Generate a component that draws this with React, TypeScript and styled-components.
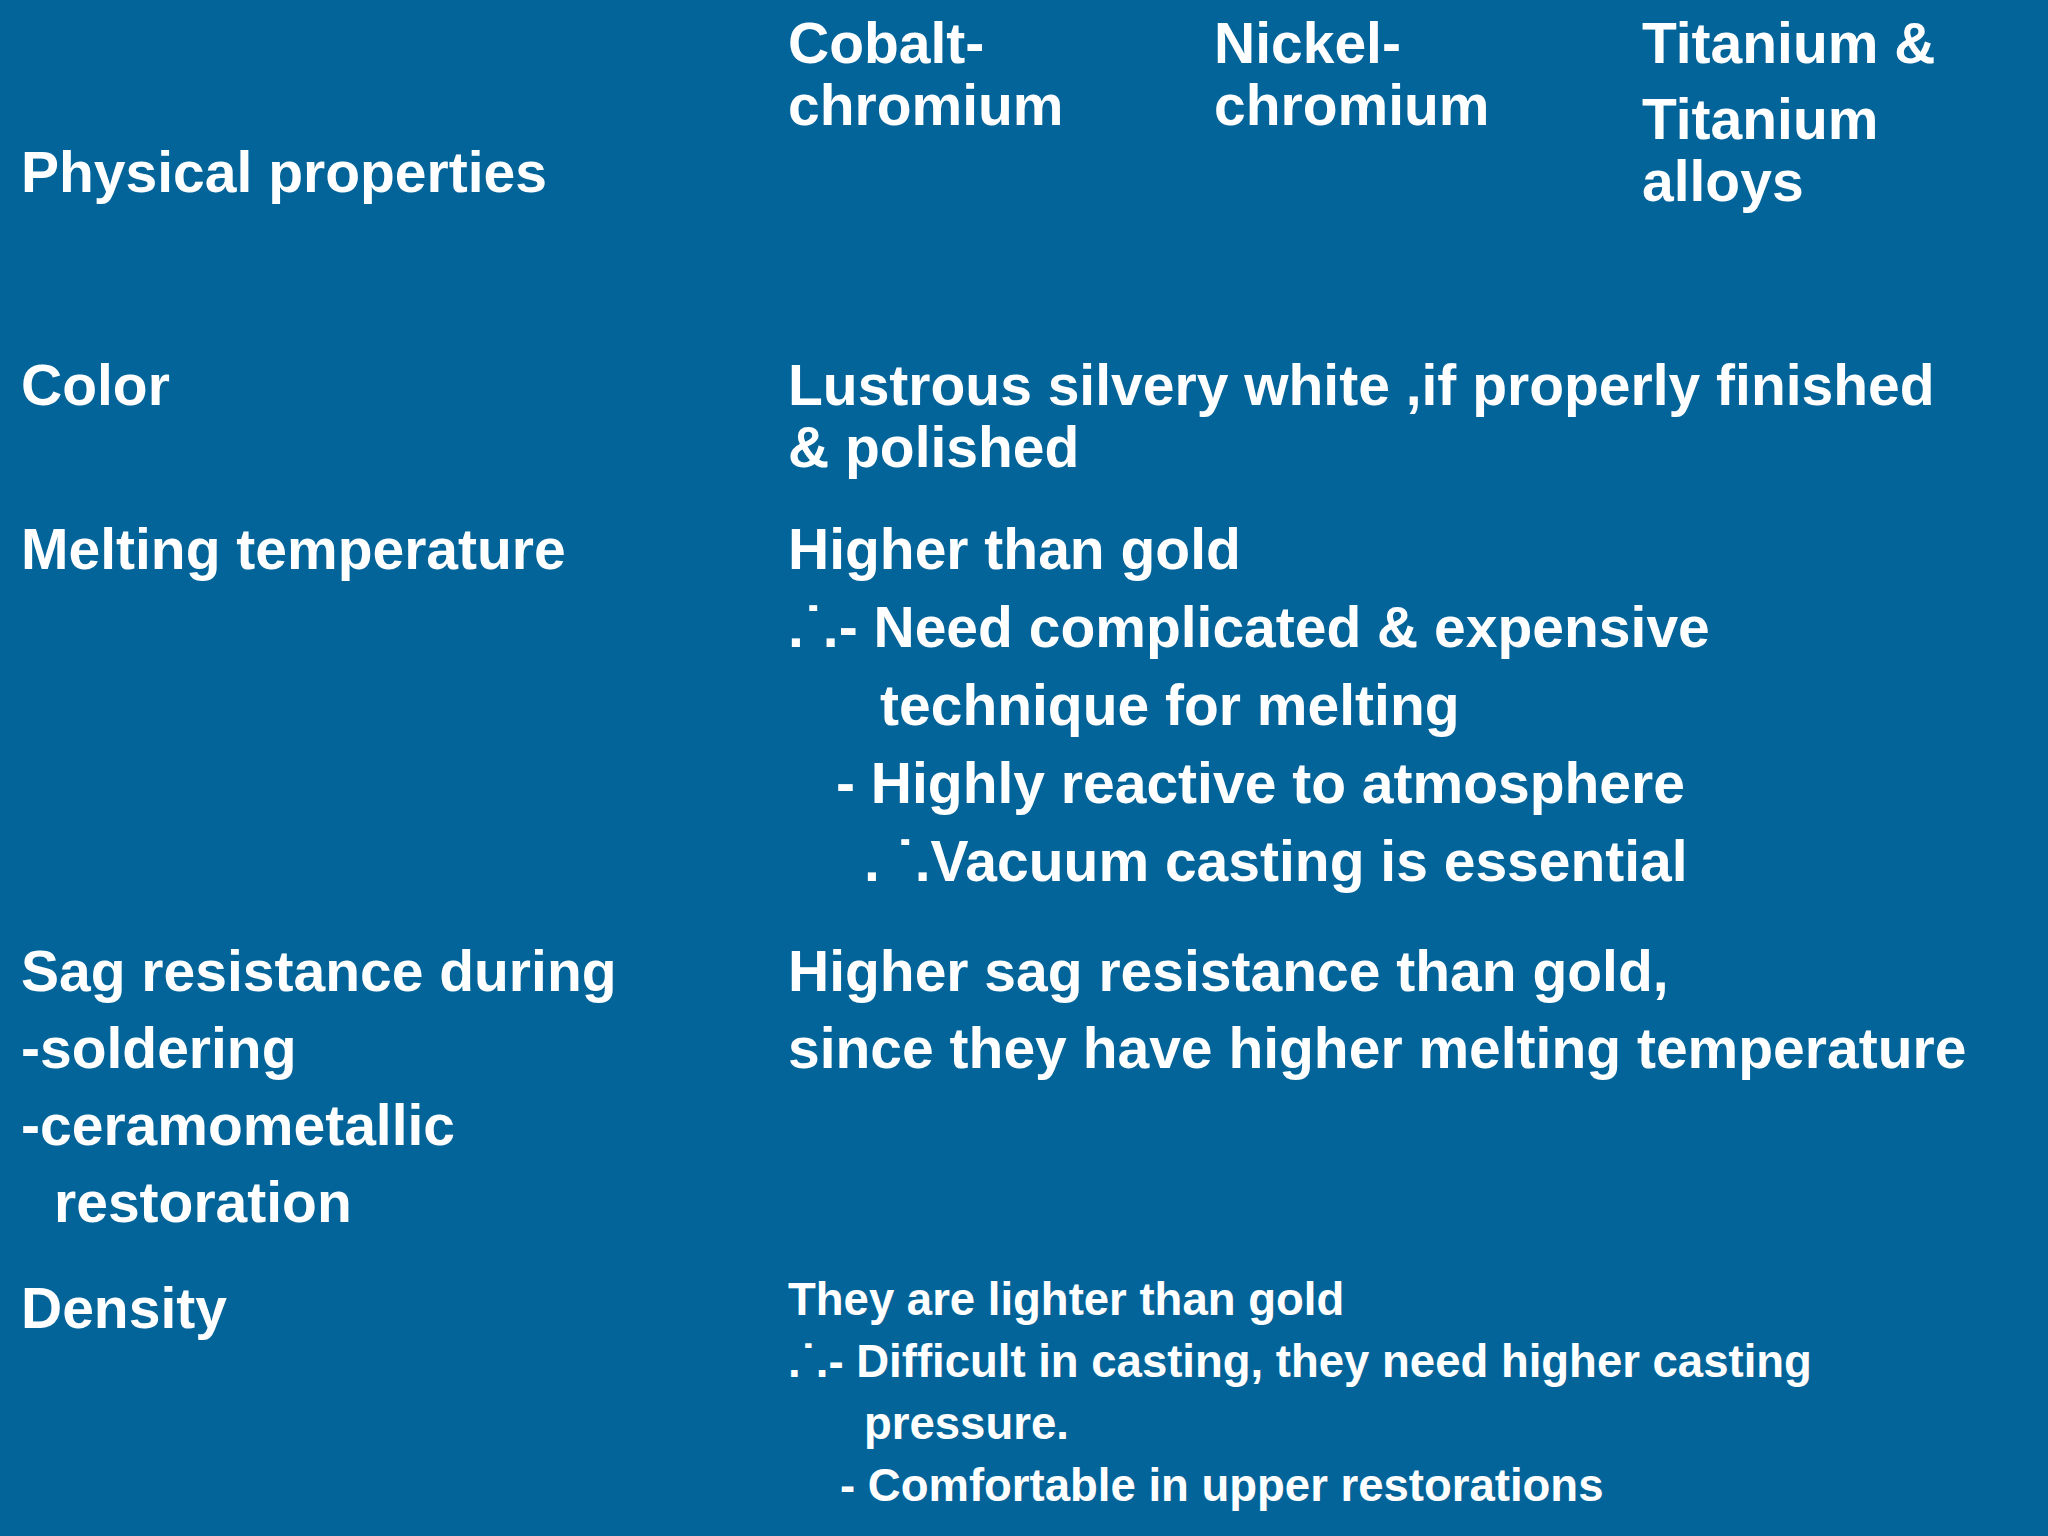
import styled, { createGlobalStyle } from 'styled-components';

const GlobalStyle = createGlobalStyle`
  html, body {
    margin: 0;
    padding: 0;
    background: #03649a;
  }
`;

export default function App() {
  return (
    <>
      <GlobalStyle />
      <Slide>
        <Row>
          <Stack $offset={129}>
            <Line>Physical properties</Line>
          </Stack>
          <HeaderCols>
            <Stack>
              <Line>
                Cobalt-
                <br />
                chromium
              </Line>
            </Stack>
            <Stack>
              <Line>
                Nickel-
                <br />
                chromium
              </Line>
            </Stack>
            <Stack $gap={14}>
              <Line>Titanium &amp;</Line>
              <Line>
                Titanium
                <br />
                alloys
              </Line>
            </Stack>
          </HeaderCols>
        </Row>

        <Row $gap={142}>
          <Stack>
            <Line>Color</Line>
          </Stack>
          <Stack>
            <Line>
              Lustrous silvery white ,if properly finished
              <br />
              &amp; polished
            </Line>
          </Stack>
        </Row>

        <Row $gap={40}>
          <Stack>
            <Line>Melting temperature</Line>
          </Stack>
          <Stack $gap={16}>
            <Line>Higher than gold</Line>
            <Line>.˙.- Need complicated &amp; expensive</Line>
            <Line $indent={92}>technique for melting</Line>
            <Line $indent={48}>- Highly reactive to atmosphere</Line>
            <Line $indent={76}>. ˙.Vacuum casting is essential</Line>
          </Stack>
        </Row>

        <Row $gap={48}>
          <Stack $gap={15}>
            <Line>Sag resistance during</Line>
            <Line>-soldering</Line>
            <Line>-ceramometallic</Line>
            <Line $indent={33}>restoration</Line>
          </Stack>
          <Stack $gap={15}>
            <Line>Higher sag resistance than gold,</Line>
            <Line>since they have higher melting temperature</Line>
          </Stack>
        </Row>

        <Row $gap={36}>
          <Stack $offset={8}>
            <Line>Density</Line>
          </Stack>
          <Stack $small>
            <Line>They are lighter than gold</Line>
            <Line>.˙.- Difficult in casting, they need higher casting</Line>
            <Line $indent={76}>pressure.</Line>
            <Line $indent={52}>- Comfortable in upper restorations</Line>
          </Stack>
        </Row>
      </Slide>
    </>
  );
}

const Slide = styled.main`
  width: 2048px;
  height: 1536px;
  box-sizing: border-box;
  padding: 12px 0 0 21px;
  overflow: hidden;
  background: #03649a;
  color: #ffffff;
  font-family: 'Liberation Sans', Arial, sans-serif;
  font-weight: bold;
  font-size: 57px;
  line-height: 62px;
`;

const Row = styled.section<{ $gap?: number }>`
  display: grid;
  grid-template-columns: 767px 1fr;
  margin-top: ${(p) => p.$gap ?? 0}px;
`;

const HeaderCols = styled.div`
  display: grid;
  grid-template-columns: 426px 428px 1fr;
`;

const Stack = styled.div<{ $offset?: number; $gap?: number; $small?: boolean }>`
  display: flex;
  flex-direction: column;
  gap: ${(p) => p.$gap ?? 0}px;
  padding-top: ${(p) => p.$offset ?? 0}px;
  font-size: ${(p) => (p.$small ? 45.5 : 57)}px;
`;

const Line = styled.p<{ $indent?: number }>`
  margin: 0;
  padding-left: ${(p) => p.$indent ?? 0}px;
  white-space: nowrap;
`;
